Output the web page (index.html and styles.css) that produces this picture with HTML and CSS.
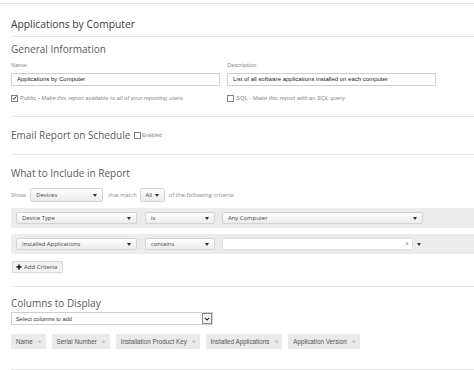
FILE: index.html
```html
<!DOCTYPE html>
<html lang="en">
<head>
<meta charset="utf-8">
<title>Applications by Computer</title>
<link rel="stylesheet" href="styles.css">
</head>
<body>
<div class="topline"></div>
<main class="page">
  <h1 class="title">Applications by Computer</h1>

  <section class="section general">
    <h2 class="heading">General Information</h2>
    <div class="fields">
      <div class="field">
        <div class="label">Name:</div>
        <div class="input">Applications by Computer</div>
        <div class="check-row">
          <span class="checkbox"><svg viewBox="0 0 8 8" width="6" height="6"><path d="M1.3 4.2 L3.2 6.1 L6.8 1.6" fill="none" stroke="#222" stroke-width="1.5"/></svg></span>
          <span class="check-text">Public <em>- Make this report available to all of your reporting users</em></span>
        </div>
      </div>
      <div class="field">
        <div class="label">Description:</div>
        <div class="input">List of all software applications installed on each computer</div>
        <div class="check-row">
          <span class="checkbox"></span>
          <span class="check-text">SQL <em>- Make this report with an SQL query</em></span>
        </div>
      </div>
    </div>
  </section>

  <section class="section email">
    <h2 class="heading">Email Report on Schedule <span class="inline-check"><span class="checkbox"></span><span class="enabled">Enabled</span></span></h2>
  </section>

  <section class="section include">
    <h2 class="heading">What to Include in Report</h2>
    <div class="show-row">
      <span class="muted">Show</span>
      <div class="select w-devices"><span>Devices</span><i class="caret"></i></div>
      <span class="muted match">that match</span>
      <div class="select w-all"><span>All</span><i class="caret"></i></div>
      <span class="muted">of the following criteria:</span>
    </div>
    <div class="crit-row">
      <div class="select w-field"><span>Device Type</span><i class="caret"></i></div>
      <div class="select w-op"><span>is</span><i class="caret"></i></div>
      <div class="select w-value"><span>Any Computer</span><i class="caret"></i></div>
    </div>
    <div class="crit-row">
      <div class="select w-field"><span>Installed Applications</span><i class="caret"></i></div>
      <div class="select w-op"><span>contains</span><i class="caret"></i></div>
      <div class="combo"><span class="clear">&#215;</span></div>
      <i class="caret combo-caret"></i>
    </div>
    <button class="add-btn" type="button">
      <svg viewBox="0 0 8 8" width="6" height="6"><path d="M4 0.5 V7.5 M0.5 4 H7.5" stroke="#111" stroke-width="2"/></svg>
      <span>Add Criteria</span>
    </button>
  </section>

  <section class="section columns">
    <h2 class="heading">Columns to Display</h2>
    <div class="col-select">
      <span>Select columns to add</span>
      <span class="col-arrow"><svg viewBox="0 0 8 8" width="6" height="6"><path d="M1.2 2.6 L4 5.4 L6.8 2.6" fill="none" stroke="#222" stroke-width="1.4"/></svg></span>
    </div>
    <div class="tags">
      <span class="tag">Name<b class="x">&#215;</b></span>
      <span class="tag">Serial Number<b class="x">&#215;</b></span>
      <span class="tag">Installation Product Key<b class="x">&#215;</b></span>
      <span class="tag">Installed Applications<b class="x">&#215;</b></span>
      <span class="tag">Application Version<b class="x">&#215;</b></span>
    </div>
  </section>
</main>
</body>
</html>
```

FILE: styles.css
```css
* { box-sizing: border-box; }

html, body {
  margin: 0;
  padding: 0;
  background: #fff;
  overflow: hidden;
}

body {
  font-family: "Open Sans", "Liberation Sans", sans-serif;
  color: #555;
}

.topline {
  height: 4px;
  border-bottom: 1px solid #e4e4e4;
}

.page {
  padding-left: 11px;
}

.title {
  margin: 0;
  padding: 13px 0 5px;
  font-size: 10.3px;
  line-height: 14px;
  font-weight: 400;
  color: #3a3a3a;
  border-bottom: 1px solid #e6e6e6;
}

.section {
  border-bottom: 1px solid #e6e6e6;
}

.heading {
  margin: 0;
  font-size: 10px;
  line-height: 14px;
  font-weight: 400;
  color: #5a5a5a;
}

/* General information */
.general { padding: 5px 0 13px; }

.fields {
  margin-top: 5px;
  display: grid;
  grid-template-columns: 209px 209px;
  column-gap: 7px;
}

.label {
  font-family: "Liberation Sans", Arial, sans-serif;
  font-size: 5.8px;
  line-height: 8px;
  color: #888;
}

.input {
  margin-top: 4px;
  height: 13px;
  border: 1px solid #cfcfcf;
  background: #fff;
  padding-left: 5px;
  font-family: "Liberation Sans", Arial, sans-serif;
  font-size: 6px;
  line-height: 11px;
  color: #222;
  white-space: nowrap;
  overflow: hidden;
}

.check-row {
  margin-top: 7px;
  height: 10px;
  display: flex;
  align-items: center;
  gap: 2px;
}

.checkbox {
  width: 7px;
  height: 7px;
  border: 1px solid #808080;
  background: #fff;
  display: inline-flex;
  align-items: center;
  justify-content: center;
  flex: none;
}

.checkbox svg { display: block; }

.check-text {
  font-family: "Liberation Sans", Arial, sans-serif;
  font-size: 5.9px;
  color: #888;
  white-space: nowrap;
}

.check-text em { font-style: italic; }

/* Email */
.email { padding: 11px 0 11px; }

.inline-check {
  display: inline-flex;
  align-items: center;
  gap: 1px;
  vertical-align: middle;
  margin-left: 1px;
  position: relative;
  top: -1px;
}

.enabled {
  font-family: "Liberation Sans", Arial, sans-serif;
  font-size: 5.4px;
  color: #888;
}

/* Include */
.include { padding: 11px 0 13px; }

.show-row {
  margin-top: 8px;
  height: 14px;
  display: flex;
  align-items: center;
}

.muted {
  font-size: 6px;
  color: #888;
  white-space: nowrap;
}

.show-row .muted:first-child { margin-right: 4px; }
.show-row .match { margin: 0 3px 0 5px; font-size: 5.6px; }
.show-row .muted:last-child { margin-left: 4px; }

.select {
  height: 14px;
  border: 1px solid #d4d4d4;
  border-radius: 2px;
  background: linear-gradient(#ffffff, #ebebeb);
  display: flex;
  align-items: center;
  justify-content: space-between;
  padding: 0 5px 0 5px;
  font-size: 5.9px;
  color: #444;
  white-space: nowrap;
  flex: none;
}

.caret {
  width: 0;
  height: 0;
  border-left: 2px solid transparent;
  border-right: 2px solid transparent;
  border-top: 3px solid #333;
  flex: none;
}

.w-devices { width: 73px; }
.w-all { width: 25px; }

.crit-row {
  margin-top: 6px;
  height: 20px;
  background: #ececec;
  display: flex;
  align-items: center;
  padding-left: 5px;
}

.crit-row .select { height: 12px; }
.crit-row + .crit-row { margin-top: 6px; }

.w-field { width: 121px; margin-right: 8px; }
.w-op { width: 70px; margin-right: 7px; }
.w-value { width: 201px; }

.combo {
  width: 191px;
  height: 12px;
  background: #fff;
  border: 1px solid #e0e0e0;
  display: flex;
  align-items: center;
  justify-content: flex-end;
  padding-right: 3px;
}

.clear {
  font-family: "Liberation Sans", Arial, sans-serif;
  font-size: 7px;
  line-height: 8px;
  color: #888;
}

.combo-caret { margin-left: 4px; }

.add-btn {
  margin-top: 7px;
  margin-left: 1px;
  height: 12px;
  width: 51px;
  border: 1px solid #dadada;
  border-radius: 1px;
  background: #f2f2f2;
  display: flex;
  align-items: center;
  gap: 2px;
  padding: 0 0 0 3px;
  font-family: "Open Sans", sans-serif;
  font-size: 6px;
  color: #444;
  cursor: pointer;
}

.add-btn svg { display: block; flex: none; }

/* Columns */
.columns { padding: 9px 0 20px; }

.col-select {
  margin-top: 2px;
  width: 202px;
  height: 13px;
  border: 1px solid #cfcfcf;
  display: flex;
  align-items: center;
  justify-content: space-between;
  padding-left: 4px;
  font-family: "Liberation Sans", Arial, sans-serif;
  font-size: 5.7px;
  color: #333;
}

.col-arrow {
  width: 10px;
  height: 11px;
  border: 1px solid #8a8a8a;
  background: #f4f4f4;
  display: flex;
  align-items: center;
  justify-content: center;
}

.col-arrow svg { display: block; }

.tags {
  margin-top: 9px;
  display: flex;
  gap: 6px;
}

.tag {
  height: 15px;
  background: #eaeaea;
  display: inline-flex;
  align-items: center;
  padding: 0 4px 0 5px;
  font-family: "Liberation Sans", Arial, sans-serif;
  font-size: 6.3px;
  color: #555;
  white-space: nowrap;
}

.x {
  font-weight: 400;
  margin-left: 5px;
  font-size: 6.5px;
  color: #aaa;
}
```
